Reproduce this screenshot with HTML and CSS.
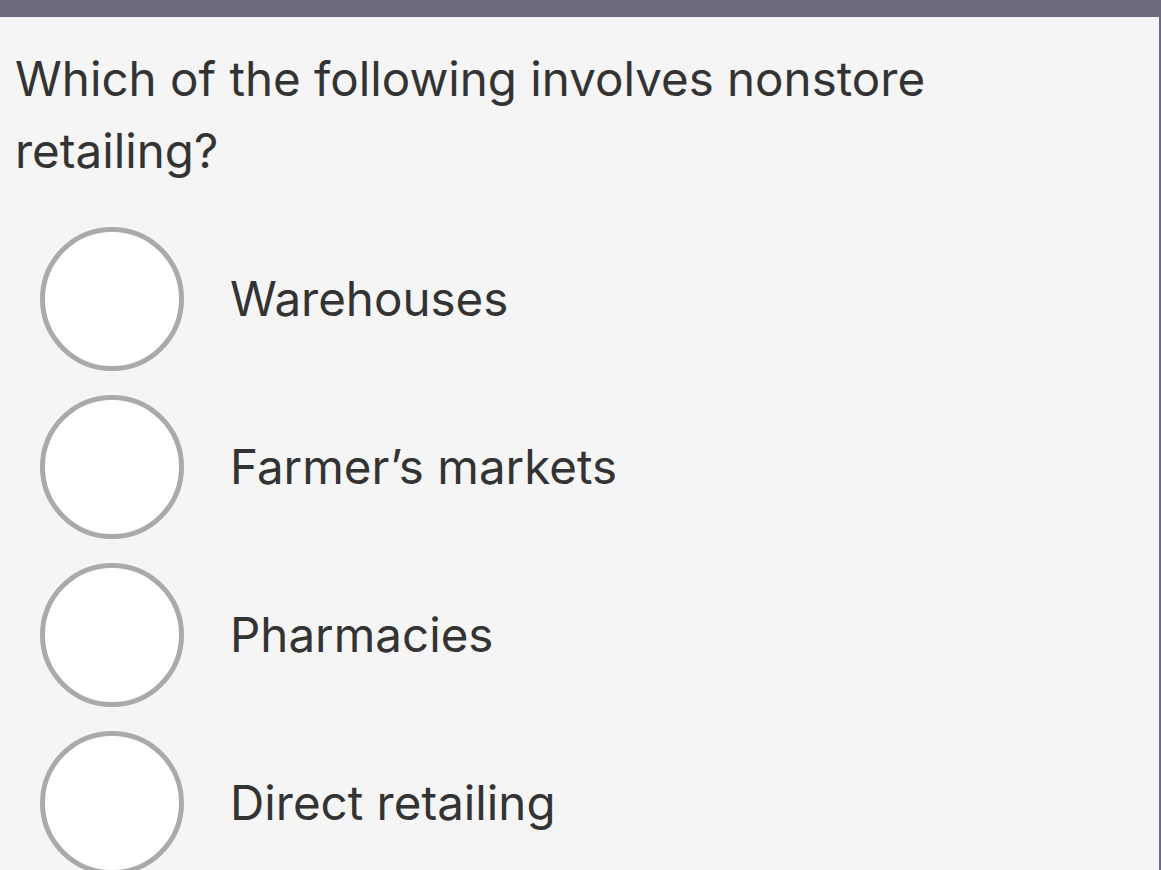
FILE: index.html
```html
<!DOCTYPE html>
<html lang="en">
<head>
<meta charset="utf-8">
<title>Question</title>
<link rel="stylesheet" href="styles.css">
</head>
<body>
<div class="topbar"></div>
<main class="panel">
  <p class="question">Which of the following involves nonstore retailing?</p>
  <ul class="options">
    <li class="option"><span class="radio"></span><span class="label">Warehouses</span></li>
    <li class="option"><span class="radio"></span><span class="label">Farmer’s markets</span></li>
    <li class="option"><span class="radio"></span><span class="label">Pharmacies</span></li>
    <li class="option"><span class="radio"></span><span class="label">Direct retailing</span></li>
  </ul>
</main>
</body>
</html>
```
FILE: styles.css
```css
html, body {
  margin: 0;
  padding: 0;
  height: 100%;
  overflow: hidden;
}
body {
  background: #f5f5f5;
  font-family: Inter, "Noto Sans", "Liberation Sans", sans-serif;
  color: #333333;
}
.topbar {
  height: 17px;
  background: #6b6a7e;
}
.panel {
  box-sizing: border-box;
  height: 853px;
  border-right: 2px solid #6b6a7e;
  padding: 26px 0 0 15px;
}
.question {
  margin: 0;
  font-size: 47.5px;
  line-height: 72px;
  max-width: 960px;
}
.options {
  list-style: none;
  margin: 40px 0 0 0;
  padding: 0 0 0 25px;
  display: flex;
  flex-direction: column;
  gap: 24px;
}
.option {
  display: flex;
  align-items: center;
  gap: 46px;
}
.radio {
  box-sizing: border-box;
  width: 144px;
  height: 144px;
  border-radius: 50%;
  border: 5px solid #aaaaaa;
  background: #ffffff;
  flex: none;
}
.label {
  font-size: 47.5px;
  line-height: 58px;
}
```
